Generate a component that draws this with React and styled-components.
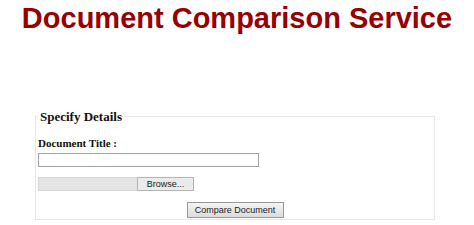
import React from 'react';
import styled, { createGlobalStyle } from 'styled-components';

const GlobalStyle = createGlobalStyle`
    body {
        margin: 0;
        background: #ffffff;
    }
`;

const Page = styled.div`
    width: 474px;
    height: 225px;
    overflow: hidden;
`;

const Title = styled.h1`
    margin: 0;
    padding-top: 1px;
    text-align: center;
    font-family: "Liberation Sans", Arial, sans-serif;
    font-size: 29px;
    line-height: 34px;
    font-weight: 700;
    color: #960000;
`;

const Form = styled.div`
    padding: 74px 39px 0 35px;
`;

const Fieldset = styled.fieldset`
    margin: 0;
    padding: 0 2px 1px 2px;
    border: 1px solid #e6e6e6;
    font-family: "Liberation Serif", "Times New Roman", serif;
`;

const Legend = styled.legend`
    padding: 0 2px;
    margin-left: 0;
    font-size: 13px;
    line-height: 15px;
    font-weight: 700;
    color: #111;
`;

const Label = styled.div`
    margin-top: 13px;
    font-size: 11px;
    line-height: 13px;
    font-weight: 700;
    color: #111;
`;

const TextInput = styled.input`
    display: block;
    box-sizing: border-box;
    margin: 3px 0 0;
    width: 221px;
    height: 14px;
    padding: 0 2px;
    border: 1px solid #a3a3a3;
    outline: none;
`;

const FileRow = styled.div`
    display: flex;
    margin-top: 10px;
    height: 14px;
`;

const FileName = styled.div`
    box-sizing: border-box;
    width: 99px;
    height: 14px;
    background: #e4e4e4;
    border: 1px solid #d6d6d6;
    border-right: none;
`;

const Button = styled.button`
    box-sizing: border-box;
    margin: 0;
    padding: 0;
    width: ${p => p.$w}px;
    height: ${p => p.$h}px;
    font-family: "Liberation Sans", Arial, sans-serif;
    font-size: 9px;
    line-height: 1;
    color: #222;
    background: ${p => p.$grad ? 'linear-gradient(#f4f4f4, #dcdcdc)' : '#ebebeb'};
    border: 1px solid ${p => p.$grad ? '#999' : '#b4b4b4'};
    border-radius: 0;
`;

const Actions = styled.div`
    display: flex;
    justify-content: center;
    margin-top: 11px;
`;

export default function App() {
    return (
        <Page>
            <GlobalStyle />
            <Title>Document Comparison Service</Title>
            <Form>
                <Fieldset>
                    <Legend>Specify Details</Legend>
                    <Label>Document Title :</Label>
                    <TextInput type="text" />
                    <FileRow>
                        <FileName />
                        <Button $w={57} $h={14}>Browse...</Button>
                    </FileRow>
                    <Actions>
                        <Button $w={97} $h={16} $grad>Compare Document</Button>
                    </Actions>
                </Fieldset>
            </Form>
        </Page>
    );
}
